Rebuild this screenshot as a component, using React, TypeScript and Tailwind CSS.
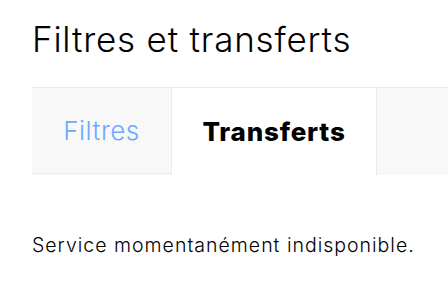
import React from "react";

export default function App() {
  return (
    <div className="w-[448px] h-[307px] bg-white overflow-hidden pl-8 text-black" style={{ fontFamily: "Inter, 'Noto Sans', sans-serif" }}>
      <h1 className="pt-[17px] h-[87px] text-[35px] leading-[44px] font-light tracking-[0.8px]">Filtres et transferts</h1>
      <div className="flex h-[88px] border-t border-[#ebebeb] bg-[#f8f8f8]">
        <div className="w-[139px] h-[86px] flex items-center justify-center border-b border-[#ebebeb] text-[26px] text-[#6ea8fe] font-light tracking-[0.5px]">
          Filtres
        </div>
        <div className="w-[206px] h-[87px] flex items-center justify-center bg-white border-x border-[#ebebeb] text-[26px] font-extrabold tracking-[0.8px]">
          Transferts
        </div>
        <div className="flex-1" />
      </div>
      <p className="mt-[56px] text-[19.5px] font-light leading-[28px] tracking-[1px]">Service momentanément indisponible.</p>
    </div>
  );
}
